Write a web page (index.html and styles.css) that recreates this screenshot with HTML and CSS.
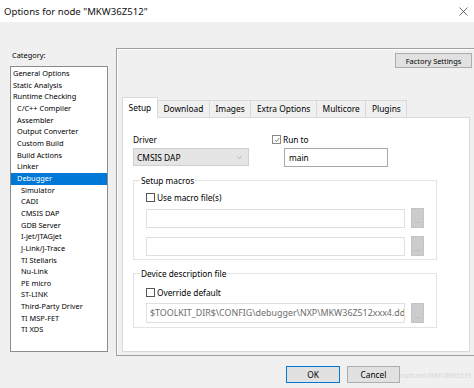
FILE: index.html
```html
<!DOCTYPE html>
<html lang="en">
<head>
  <meta charset="UTF-8">
  <title>Options for node "MKW36Z512"</title>
  <link rel="stylesheet" href="styles.css">
</head>
<body>
  <!-- Title bar -->
  <div class="titlebar">
    <span class="title">Options for node "MKW36Z512"</span>
    <svg class="close" width="9" height="9" viewBox="0 0 9 9"><path d="M0.5 0.5 L8.5 8.5 M8.5 0.5 L0.5 8.5" stroke="#444" stroke-width="0.8"/></svg>
  </div>

  <div class="main">
    <!-- Category list -->
    <div class="sidebar">
      <div class="cat-label">Category:</div>
      <ul class="listbox">
        <li class="lvl0">General Options</li>
        <li class="lvl0">Static Analysis</li>
        <li class="lvl0">Runtime Checking</li>
        <li class="lvl1">C/C++ Compiler</li>
        <li class="lvl1">Assembler</li>
        <li class="lvl1">Output Converter</li>
        <li class="lvl1">Custom Build</li>
        <li class="lvl1">Build Actions</li>
        <li class="lvl1">Linker</li>
        <li class="lvl1 selected">Debugger</li>
        <li class="lvl2">Simulator</li>
        <li class="lvl2">CADI</li>
        <li class="lvl2">CMSIS DAP</li>
        <li class="lvl2">GDB Server</li>
        <li class="lvl2">I-jet/JTAGjet</li>
        <li class="lvl2">J-Link/J-Trace</li>
        <li class="lvl2">TI Stellaris</li>
        <li class="lvl2">Nu-Link</li>
        <li class="lvl2">PE micro</li>
        <li class="lvl2">ST-LINK</li>
        <li class="lvl2">Third-Party Driver</li>
        <li class="lvl2">TI MSP-FET</li>
        <li class="lvl2">TI XDS</li>
      </ul>
    </div>

    <!-- Options panel -->
    <div class="panel">
      <div class="panel-top">
        <button class="btn factory">Factory Settings</button>
      </div>

      <div class="tabs">
        <div class="tab active">Setup</div>
        <div class="tab">Download</div>
        <div class="tab">Images</div>
        <div class="tab">Extra Options</div>
        <div class="tab">Multicore</div>
        <div class="tab">Plugins</div>
      </div>

      <div class="tab-content">
        <div class="row-top">
          <div class="driver-col">
            <div class="lbl">Driver</div>
            <div class="combo">
              <span>CMSIS DAP</span>
              <svg width="5" height="3" viewBox="0 0 5 3"><path d="M0.5 0.5 L2.5 2.5 L4.5 0.5" fill="none" stroke="#999" stroke-width="0.7"/></svg>
            </div>
          </div>
          <div class="runto-col">
            <label class="check">
              <span class="box checked"><svg width="6" height="6" viewBox="0 0 6 6"><path d="M0.8 3 L2.4 4.6 L5.2 1.2" fill="none" stroke="#555" stroke-width="0.8"/></svg></span>
              Run to
            </label>
            <div class="textbox main-box">main</div>
          </div>
        </div>

        <fieldset class="group macros">
          <legend>Setup macros</legend>
          <label class="check"><span class="box"></span>Use macro file(s)</label>
          <div class="file-row first">
            <div class="textbox disabled"></div>
            <div class="dots">...</div>
          </div>
          <div class="file-row">
            <div class="textbox disabled"></div>
            <div class="dots">...</div>
          </div>
        </fieldset>

        <fieldset class="group device">
          <legend>Device description file</legend>
          <label class="check"><span class="box"></span>Override default</label>
          <div class="file-row first">
            <div class="textbox disabled path">$TOOLKIT_DIR$\CONFIG\debugger\NXP\MKW36Z512xxx4.ddf</div>
            <div class="dots">...</div>
          </div>
        </fieldset>
      </div>
    </div>
  </div>

  <div class="footer">
    <button class="btn ok">OK</button>
    <button class="btn">Cancel</button>
  </div>

  <div class="watermark">csdn.net/WM18695539</div>
</body>
</html>
```

FILE: styles.css
```css
body {
  margin: 0;
  width: 474px;
  height: 388px;
  overflow: hidden;
  position: relative;
  background: #f0f0f0;
  font-family: "Noto Sans", "Open Sans", sans-serif;
  font-size: 8.3px;
  color: #000;
}

.titlebar {
  height: 22px;
  background: #fff;
  display: flex;
  align-items: center;
  justify-content: space-between;
  padding: 0 4px;
}
.title {
  font-size: 9.6px;
  color: #111;
}
.close {
  margin-right: 2px;
}

.main {
  display: flex;
  align-items: flex-start;
  padding-left: 10px;
}

/* category list */
.sidebar {
  width: 98px;
  margin-top: 29px;
}
.cat-label {
  font-size: 7.4px;
  line-height: 9px;
  padding-left: 2px;
}
.listbox {
  list-style: none;
  margin: 6px 0 0;
  padding: 1px 0 0;
  height: 283px;
  background: #fff;
  border: 1px solid #8c8c8c;
}
.listbox li {
  font-size: 7.4px;
  line-height: 11.67px;
  height: 11.67px;
  white-space: nowrap;
}
.lvl0 { padding-left: 2px; }
.lvl1 { padding-left: 6px; }
.lvl2 { padding-left: 10px; }
.listbox .selected {
  background: #0078d7;
  color: #fff;
}

/* right panel */
.panel {
  margin-left: 8px;
  margin-top: 26px;
  width: 357px;
  height: 306px;
  border: 1px solid #a0a0a0;
  border-right: none;
  box-shadow: inset 1px 1px #fff;
}
.panel-top {
  display: flex;
  justify-content: flex-end;
  padding: 4px 2px 0 0;
}
.btn {
  font-family: inherit;
  background: #e1e1e1;
  border: 1px solid #adadad;
  padding: 0;
  color: #000;
}
.factory {
  width: 77px;
  height: 15px;
  font-size: 7.4px;
}

.tabs {
  display: flex;
  align-items: flex-end;
  height: 20px;
  margin: 29px 0 0 5px;
}
.tab {
  height: 17px;
  line-height: 16px;
  padding: 0 5.6px;
  font-size: 8.4px;
  border: 1px solid #d9d9d9;
  border-bottom: none;
  border-left: none;
  box-sizing: border-box;
}
.tab.active {
  height: 21px;
  line-height: 20px;
  margin-bottom: -1px;
  background: #fff;
  border-left: 1px solid #d9d9d9;
  position: relative;
  z-index: 1;
}

.tab-content {
  margin-left: 5px;
  width: 336px;
  height: 217px;
  background: #fff;
  border: 1px solid #d9d9d9;
  padding: 16px 0 0 10px;
}

.row-top {
  display: flex;
}
.lbl {
  line-height: 11px;
}
.driver-col {
  width: 116px;
}
.combo {
  margin-top: 3px;
  height: 18px;
  box-sizing: border-box;
  background: #e5e5e5;
  border: 1px solid #d0d0d0;
  display: flex;
  align-items: center;
  justify-content: space-between;
  padding: 0 6px 0 3px;
  font-size: 8.4px;
}
.runto-col {
  margin-left: 23px;
}
.check {
  display: flex;
  align-items: center;
  line-height: 11px;
  height: 11px;
}
.box {
  width: 7px;
  height: 7px;
  border: 1px solid #555;
  background: #fff;
  margin-right: 2px;
  display: flex;
  align-items: center;
  justify-content: center;
}
.box.checked {
  border-color: #888;
}
.textbox {
  height: 19px;
  box-sizing: border-box;
  background: #fff;
  border: 1px solid #a8a8a8;
  padding: 0 4px;
  line-height: 17px;
  white-space: nowrap;
  overflow: hidden;
}
.main-box {
  margin: 3px 0 0 12px;
  width: 104px;
}
.textbox.disabled {
  border-color: #e0e0e0;
  width: 259px;
  color: #6d6d6d;
}

.group {
  margin: 8px 0 0;
  padding: 0 0 3px 12px;
  width: 290px;
  border: 1px solid #e3e3e3;
}
.group legend {
  padding: 0 1px;
  margin-left: -6px;
  line-height: 11px;
}
.macros .check {
  margin-top: 6px;
}
.file-row {
  display: flex;
  align-items: center;
  margin-top: 8px;
}
.file-row.first {
  margin-top: 5px;
}
.dots {
  width: 13px;
  height: 20px;
  margin-left: 6px;
  box-sizing: border-box;
  background: #cccccc;
  border: 1px solid #c4c4c4;
  color: #9a9a9a;
  font-size: 6px;
  text-align: center;
  line-height: 24px;
}
.device {
  margin-top: 8px;
  padding-bottom: 4px;
}
.device .check {
  margin-top: 8px;
}
.path {
  height: 20px;
  line-height: 18px;
  font-size: 8.9px;
  padding-left: 3px;
}

.footer {
  display: flex;
  justify-content: flex-end;
  gap: 7px;
  padding-right: 74px;
  margin-top: 10px;
}
.footer .btn {
  width: 53px;
  height: 17px;
  font-size: 8.3px;
}
.footer .ok {
  width: 54px;
  border-color: #0078d7;
}

.watermark {
  position: absolute;
  left: 400px;
  top: 371px;
  font-size: 6.6px;
  color: rgba(185, 185, 185, 0.5);
  white-space: nowrap;
}
```
